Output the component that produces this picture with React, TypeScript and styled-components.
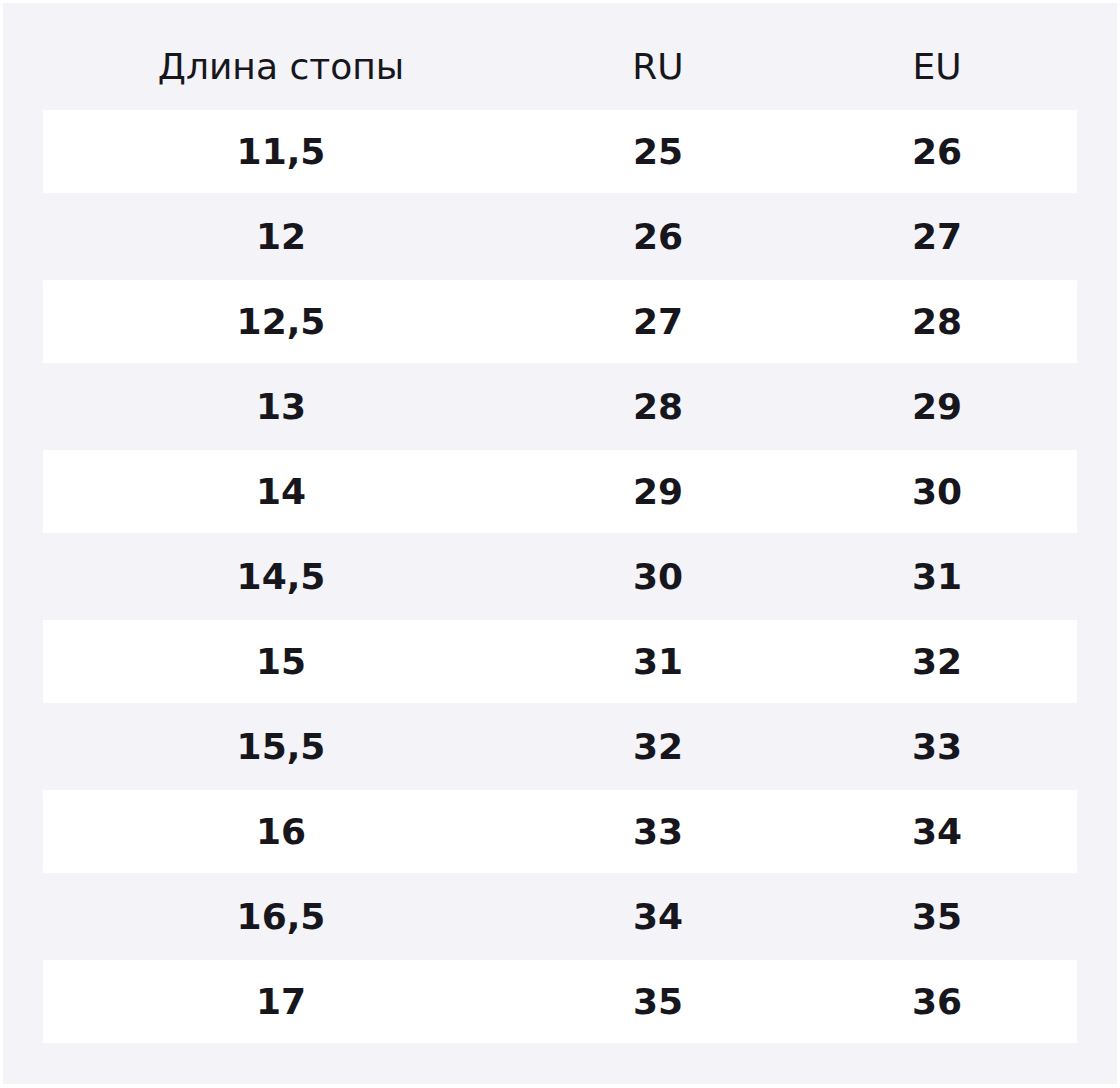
import styled, { createGlobalStyle } from "styled-components";

const GlobalStyle = createGlobalStyle`
  body {
    margin: 0;
    background: #ffffff;
    font-family: "DejaVu Sans", "Liberation Sans", sans-serif;
  }
`;

const sizes = [
  ["11,5", "25", "26"],
  ["12", "26", "27"],
  ["12,5", "27", "28"],
  ["13", "28", "29"],
  ["14", "29", "30"],
  ["14,5", "30", "31"],
  ["15", "31", "32"],
  ["15,5", "32", "33"],
  ["16", "33", "34"],
  ["16,5", "34", "35"],
  ["17", "35", "36"],
];

export default function App() {
  return (
    <>
      <GlobalStyle />
      <Panel>
        <HeaderRow>
          <HeadCell>Длина стопы</HeadCell>
          <HeadCell>RU</HeadCell>
          <HeadCell>EU</HeadCell>
        </HeaderRow>
        {sizes.map((row, i) => (
          <Row key={i} $striped={i % 2 === 0}>
            {row.map((value, j) => (
              <Cell key={j}>{value}</Cell>
            ))}
          </Row>
        ))}
      </Panel>
    </>
  );
}

const Panel = styled("div")({
  margin: "3px",
  background: "#f3f3f8",
  padding: "0 40px 41px",
  color: "#16161c",
});

const HeaderRow = styled("div")({
  display: "grid",
  gridTemplateColumns: "476px 278px 280px",
  paddingTop: "43px",
  height: "107px",
  boxSizing: "border-box",
});

const HeadCell = styled("div")({
  textAlign: "center",
  fontSize: "36px",
  fontWeight: 400,
  lineHeight: "42px",
});

const Row = styled("div")<{ $striped: boolean }>(({ $striped }) => ({
  display: "grid",
  gridTemplateColumns: "476px 278px 280px",
  alignItems: "center",
  height: $striped ? "83px" : "87px",
  background: $striped ? "#ffffff" : "transparent",
}));

const Cell = styled("div")({
  textAlign: "center",
  fontSize: "36px",
  fontWeight: 700,
  lineHeight: "42px",
});
